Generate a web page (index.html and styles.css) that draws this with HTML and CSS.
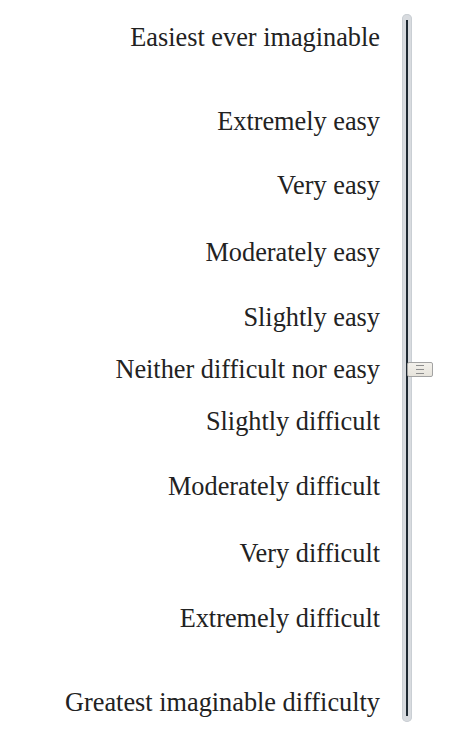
FILE: index.html
```html
<!DOCTYPE html>
<html lang="en">
<head>
<meta charset="utf-8">
<title>Difficulty rating</title>
<link rel="stylesheet" href="styles.css">
</head>
<body>
<div class="slider">
  <div class="labels">
    <span class="label" style="top:23px">Easiest ever imaginable</span>
    <span class="label" style="top:107px">Extremely easy</span>
    <span class="label" style="top:171px">Very easy</span>
    <span class="label" style="top:238px">Moderately easy</span>
    <span class="label" style="top:303px">Slightly easy</span>
    <span class="label" style="top:355px">Neither difficult nor easy</span>
    <span class="label" style="top:407px">Slightly difficult</span>
    <span class="label" style="top:472px">Moderately difficult</span>
    <span class="label" style="top:539px">Very difficult</span>
    <span class="label" style="top:604px">Extremely difficult</span>
    <span class="label" style="top:688px">Greatest imaginable difficulty</span>
  </div>
  <div class="track" role="slider" aria-valuemin="0" aria-valuemax="100" aria-valuenow="50">
    <div class="thumb" style="top:348px">
      <span class="grip"></span>
    </div>
  </div>
</div>
</body>
</html>
```
FILE: styles.css
```css
html, body {
  margin: 0;
  padding: 0;
  background: #ffffff;
}

.slider {
  display: flex;
  padding-top: 14px;
  font-family: "Liberation Serif", "Times New Roman", serif;
  color: #222222;
}

.labels {
  position: relative;
  width: 380px;
  height: 708px;
  flex: none;
}

.label {
  position: absolute;
  right: 0;
  font-size: 26.3px;
  line-height: 1;
  white-space: nowrap;
  transform: translateY(calc(-50% + 1px));
}

.track {
  position: relative;
  margin-left: 22px;
  width: 10px;
  height: 708px;
  border-radius: 5px;
  background: #d8dbdf;
  box-shadow: inset 0 0 0 1px #cacfd4;
  flex: none;
}

/* dark groove down the middle of the rail */
.track::before {
  content: "";
  position: absolute;
  left: 4px;
  top: 6px;
  bottom: 6px;
  width: 2px;
  background: #1f2a33;
}

.thumb {
  position: absolute;
  left: 5px;
  width: 24px;
  height: 13px;
  border: 1px solid #a3a3a3;
  border-radius: 2px;
  background: linear-gradient(#f3f1ec, #e7e4dc);
  display: flex;
  align-items: center;
  justify-content: center;
}

/* three-line grip drawn with borders */
.grip {
  width: 8px;
  height: 7px;
  border-top: 1px solid #8e8e8e;
  border-bottom: 1px solid #8e8e8e;
  position: relative;
}

.grip::after {
  content: "";
  position: absolute;
  left: 0;
  right: 0;
  top: 3px;
  height: 1px;
  background: #8e8e8e;
}
```
